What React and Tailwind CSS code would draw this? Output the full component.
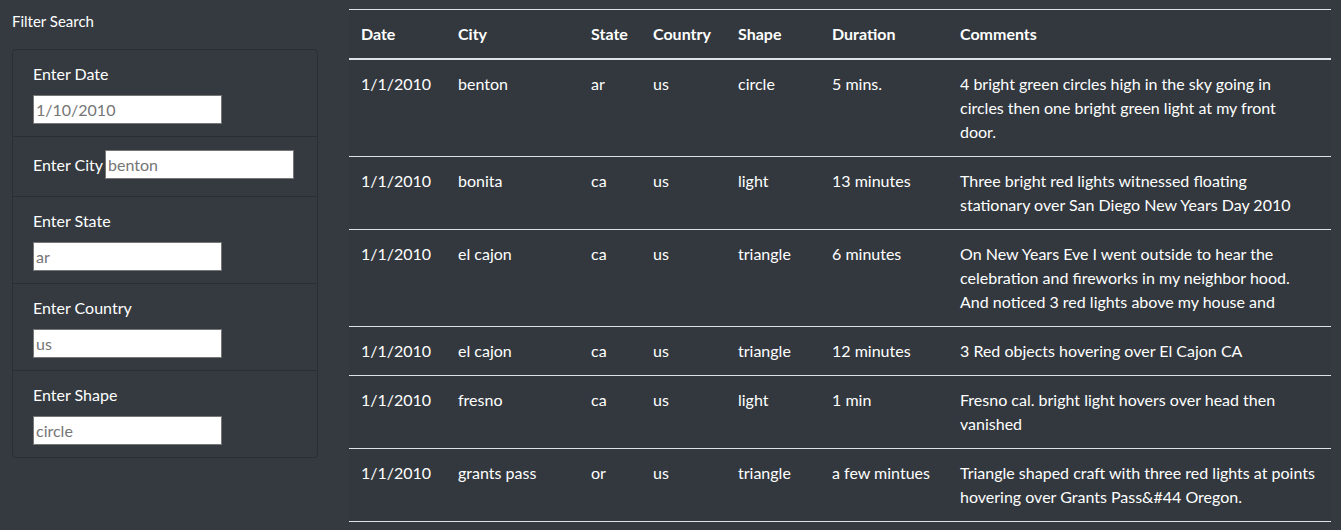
import React from "react";

const rows = [
  {
    date: "1/1/2010",
    city: "benton",
    state: "ar",
    country: "us",
    shape: "circle",
    duration: "5 mins.",
    comments: [
      "4 bright green circles high in the sky going in",
      "circles then one bright green light at my front",
      "door.",
    ],
  },
  {
    date: "1/1/2010",
    city: "bonita",
    state: "ca",
    country: "us",
    shape: "light",
    duration: "13 minutes",
    comments: [
      "Three bright red lights witnessed floating",
      "stationary over San Diego New Years Day 2010",
    ],
  },
  {
    date: "1/1/2010",
    city: "el cajon",
    state: "ca",
    country: "us",
    shape: "triangle",
    duration: "6 minutes",
    comments: [
      "On New Years Eve I went outside to hear the",
      "celebration and fireworks in my neighbor hood.",
      "And noticed 3 red lights above my house and",
    ],
  },
  {
    date: "1/1/2010",
    city: "el cajon",
    state: "ca",
    country: "us",
    shape: "triangle",
    duration: "12 minutes",
    comments: ["3 Red objects hovering over El Cajon CA"],
  },
  {
    date: "1/1/2010",
    city: "fresno",
    state: "ca",
    country: "us",
    shape: "light",
    duration: "1 min",
    comments: ["Fresno cal. bright light hovers over head then", "vanished"],
  },
  {
    date: "1/1/2010",
    city: "grants pass",
    state: "or",
    country: "us",
    shape: "triangle",
    duration: "a few mintues",
    comments: [
      "Triangle shaped craft with three red lights at points",
      "hovering over Grants Pass&#44 Oregon.",
    ],
  },
];

const filters = [
  { label: "Enter Date", value: "1/10/2010" },
  { label: "Enter City", value: "benton", inline: true },
  { label: "Enter State", value: "ar" },
  { label: "Enter Country", value: "us" },
  { label: "Enter Shape", value: "circle" },
];

const cols = [
  { name: "Date", w: "w-[97px]" },
  { name: "City", w: "w-[133px]" },
  { name: "State", w: "w-[62px]" },
  { name: "Country", w: "w-[85px]" },
  { name: "Shape", w: "w-[94px]" },
  { name: "Duration", w: "w-[128px]" },
  { name: "Comments", w: "w-[383px]" },
];

function FilterItem({ f, last }) {
  const input = (
    <input
      defaultValue=""
      placeholder={f.value}
      className="h-[29px] w-[189px] border border-[#767676] bg-white px-[2px] text-[16px] text-[#333] placeholder:text-[#757575] outline-none"
    />
  );
  if (f.inline) {
    return (
      <li className={`flex items-center gap-[2px] px-[20px] pt-[13px] pb-[17px] ${last ? "" : "border-b border-[#2a2f34]"}`}>
        <label className="text-[16px] leading-[24px] text-white">{f.label}</label>
        {input}
      </li>
    );
  }
  return (
    <li className={`px-[20px] pt-[12px] pb-[12px] ${last ? "" : "border-b border-[#2a2f34]"}`}>
      <label className="mb-[9px] block text-[16px] leading-[24px] text-white">{f.label}</label>
      {input}
    </li>
  );
}

export default function App() {
  return (
    <div
      className="flex min-h-[530px] w-full bg-[#343a40] text-white"
      style={{ fontFamily: '"Segoe UI", Lato, "Noto Sans", sans-serif' }}
    >
      {/* Filters */}
      <div className="w-[349px] shrink-0 pl-[12px] pr-[31px] pt-[11px]">
        <p className="text-[15px] leading-[20px]">Filter Search</p>
        <ul className="mt-[18px] rounded-[4px] border border-[#2a2f34]">
          {filters.map((f, i) => (
            <FilterItem key={f.label} f={f} last={i === filters.length - 1} />
          ))}
        </ul>
      </div>

      {/* Results */}
      <div className="pt-[9px]">
        <table className="w-[982px] table-fixed border-collapse bg-[#32383e] text-[16px] leading-[24px]">
          <thead>
            <tr className="border-t border-b-2 border-t-[#dee2e6] border-b-[#dee2e6]">
              {cols.map((c) => (
                <th key={c.name} className={`${c.w} px-[12px] py-[12px] text-left font-bold`}>
                  {c.name}
                </th>
              ))}
            </tr>
          </thead>
          <tbody>
            {rows.map((r, i) => (
              <tr key={i} className="border-b border-[#dee2e6] align-top">
                <td className="px-[12px] py-[12px]">{r.date}</td>
                <td className="px-[12px] py-[12px]">{r.city}</td>
                <td className="px-[12px] py-[12px]">{r.state}</td>
                <td className="px-[12px] py-[12px]">{r.country}</td>
                <td className="px-[12px] py-[12px]">{r.shape}</td>
                <td className="whitespace-nowrap px-[12px] py-[12px]">{r.duration}</td>
                <td className="whitespace-nowrap px-[12px] py-[12px]">
                  {r.comments.map((line, j) => (
                    <div key={j}>{line}</div>
                  ))}
                </td>
              </tr>
            ))}
          </tbody>
        </table>
      </div>
    </div>
  );
}
